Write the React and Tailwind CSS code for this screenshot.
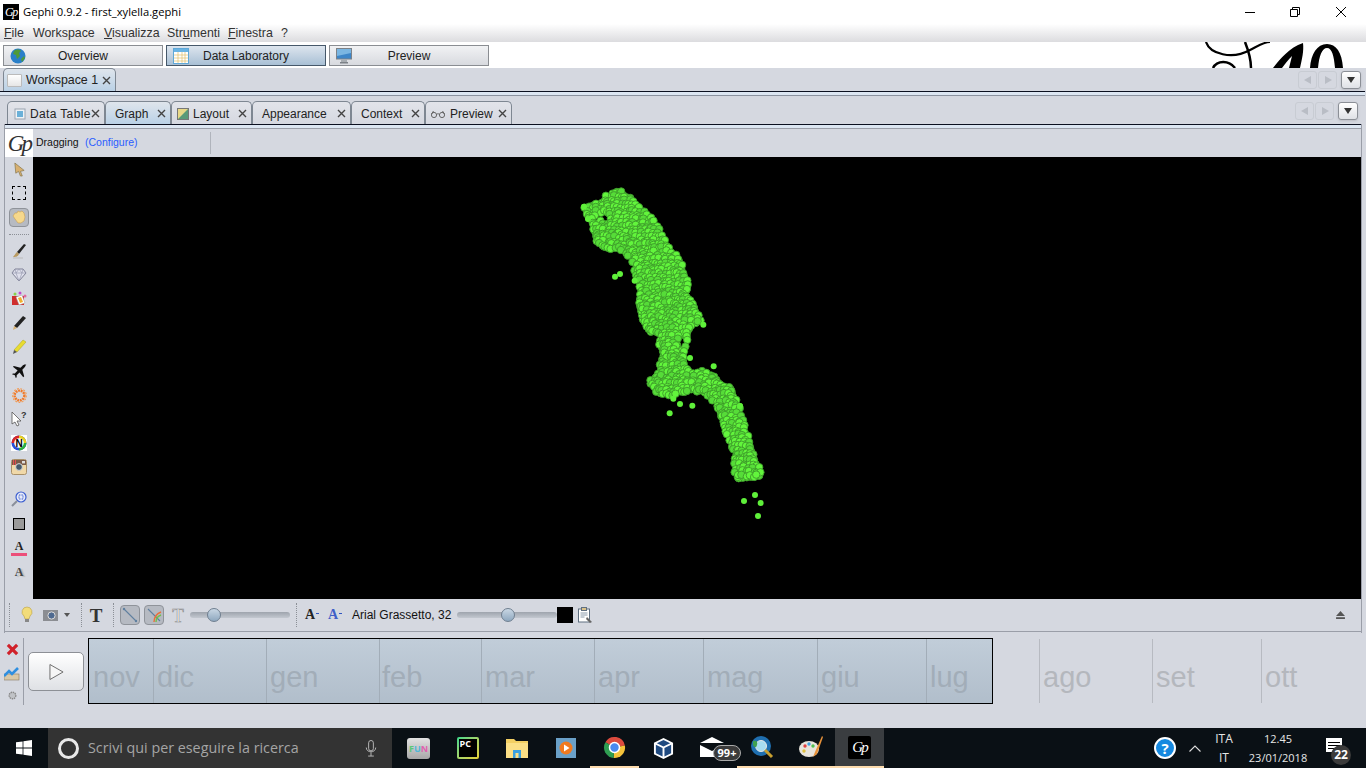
import React from 'react';

const OUTLINE = [
  [65, 80], [110, 70], [140, 45], [175, 28], [215, 50], [245, 80], [270, 105], [300, 150], [320, 190], [345, 220], [365, 240], [380, 290], [390, 320], [385, 345], [410, 380], [425, 430], [400, 440], [385, 470], [375, 510], [380, 560], [400, 580], [430, 565], [470, 585], [490, 615], [520, 625], [535, 670], [550, 720], [575, 790], [610, 895], [525, 905], [520, 810], [500, 770], [490, 730], [475, 710], [470, 675], [440, 650], [420, 640], [380, 635], [340, 650], [295, 645], [265, 605], [295, 570], [305, 530], [292, 490], [300, 460], [265, 460], [240, 420], [230, 370], [235, 330], [225, 280], [215, 240], [175, 210], [125, 205], [100, 170], [90, 130], [80, 100],
];
const STRAYS = [[180, 282], [165, 290], [224, 302], [390, 534], [461, 559], [340, 656], [360, 672], [397, 677], [329, 700], [585, 945], [552, 963], [602, 969], [594, 1008], [540, 678], [430, 434], [72, 80], [84, 117]];

function inside(x, y) {
  let hit = false;
  for (let i = 0, j = OUTLINE.length - 1; i < OUTLINE.length; j = i++) {
    const [xi, yi] = OUTLINE[i];
    const [xj, yj] = OUTLINE[j];
    if (yi > y !== yj > y && x < ((xj - xi) * (y - yi)) / (yj - yi) + xi) hit = !hit;
  }
  return hit;
}

function inHole(x, y) {
  return (x > 112 && x < 148 && y > 100 && y < 122) || (x > 356 && x < 374 && y > 470 && y < 510);
}

function buildNodes() {
  let seed = 12345;
  const rnd = () => {
    seed = (seed * 1103515245 + 12345) % 2147483648;
    return seed / 2147483648;
  };
  const nodes = [];
  // edge nodes keep the outline of the cluster crisp
  OUTLINE.forEach(([x1, y1], i) => {
    const [x2, y2] = OUTLINE[(i + 1) % OUTLINE.length];
    const len = Math.hypot(x2 - x1, y2 - y1);
    const steps = Math.max(1, Math.round(len / 13));
    for (let s = 0; s < steps; s++) {
      const t = s / steps;
      const px = x1 + (x2 - x1) * t - ((y2 - y1) / len) * 9;
      const py = y1 + (y2 - y1) * t + ((x2 - x1) / len) * 9;
      if (inside(px, py) && !inHole(px, py)) nodes.push([px, py, rnd() > 0.4]);
    }
  });
  for (let y = 28; y < 895; y += 11) {
    for (let x = 65; x < 612; x += 11) {
      const px = x + rnd() * 10 - 5;
      const py = y + rnd() * 10 - 5;
      if (!inside(px, py) || inHole(px, py) || py > 893) continue;
      if (px > 350 && px < 385 && py > 420 && py < 440 && rnd() > 0.5) continue;
      nodes.push([px, py, rnd() > 0.4]);
    }
  }
  return nodes;
}

const NODES = buildNodes();

function Graph() {
  return (
    <svg viewBox="33 157 1328 442" className="block h-full w-full">
      {NODES.map(([x, y, bright], i) => (
        <circle key={i} cx={560 + x / 3} cy={180 + y / 3} r="3.7" fill={bright ? '#62f53c' : '#56dc38'} stroke="#3d9a2a" strokeWidth="0.9" />
      ))}
      {STRAYS.map(([x, y], i) => (
        <circle key={i} cx={560 + x / 3} cy={180 + y / 3} r="3" fill="#5ff03a" />
      ))}
    </svg>
  );
}

function GephiMark({ className }) {
  return <span className={`font-['Liberation_Serif',serif] italic leading-none tracking-[-0.12em] ${className}`}>Gp</span>;
}

function Close() {
  return (
    <svg viewBox="0 0 9 9" className="size-[9px] shrink-0">
      <path d="M1 1l7 7M8 1l-7 7" stroke="#444" strokeWidth="1.4" />
    </svg>
  );
}

function Tab({ width, selected, icon, label, pad = 'pl-[6px]' }) {
  return (
    <div className={`flex h-full shrink-0 items-center justify-between rounded-t-[5px] border border-b-0 border-[#7e8792] pr-[4px] pt-px text-[12px] text-[#222] ${pad} ${width} ${selected ? 'bg-linear-to-b from-[#dfe5ec] to-[#bad1e6]' : 'bg-linear-to-b from-[#e2e4ea] to-[#d5d8e0]'}`}>
      <span className="flex items-center gap-[4px] whitespace-nowrap">
        {icon}
        {label}
      </span>
      <Close />
    </div>
  );
}

function NavButtons() {
  return (
    <div className="flex items-center">
      <div className="flex h-[18px] w-[19px] items-center justify-center rounded-[3px] border border-[#c8ccd3] text-[#b9bdc5]">
        <svg viewBox="0 0 8 8" className="size-[8px]"><path d="M7 0v8L0 4z" fill="currentColor" /></svg>
      </div>
      <div className="ml-px flex h-[18px] w-[19px] items-center justify-center rounded-[3px] border border-[#c8ccd3] text-[#b9bdc5]">
        <svg viewBox="0 0 8 8" className="size-[8px]"><path d="M1 0v8l7-4z" fill="currentColor" /></svg>
      </div>
      <div className="ml-[4px] flex h-[18px] w-[20px] items-center justify-center rounded-[3px] border border-[#8b8f96] bg-linear-to-b from-white to-[#dfe1e6] shadow-sm">
        <svg viewBox="0 0 8 6" className="h-[6px] w-[8px]"><path d="M0 0h8L4 6z" fill="#333" /></svg>
      </div>
    </div>
  );
}

function PerspectiveButton({ selected, icon, label }) {
  return (
    <div className={`flex h-[21px] w-40 items-center border pl-[6px] text-[12px] text-[#222] ${selected ? 'border-[#46586a] bg-linear-to-b from-[#dde5ee] to-[#a9c0d5]' : 'border-[#8a8d92] bg-linear-to-b from-[#f1f2f4] to-[#d8dadf]'}`}>
      <span className="flex w-[16px] justify-center">{icon}</span>
      <span className="flex-1 pr-[22px] text-center">{label}</span>
    </div>
  );
}

function Globe() {
  return (
    <svg viewBox="0 0 16 16" className="size-[16px]">
      <circle cx="8" cy="8" r="7.5" fill="#2a7fc8" />
      <path d="M4 3c2-2 6-2 7 0l-2 2 1 3-3 3-1-4-3-1zM11 11l3-3 1 2-3 4z" fill="#4f9a3a" />
    </svg>
  );
}

function SheetIcon() {
  return (
    <svg viewBox="0 0 16 16" className="size-[16px]">
      <rect x="0.5" y="0.5" width="15" height="15" fill="#fff" stroke="#5fa8d8" />
      <rect x="1" y="1" width="14" height="3" fill="#6ab4e4" />
      <path d="M1 7h14M1 10h14M1 13h14M5 4v11M9 4v11M12 4v11" stroke="#e0c06a" strokeWidth="0.7" />
    </svg>
  );
}

function Monitor() {
  return (
    <svg viewBox="0 0 16 16" className="size-[16px]">
      <rect x="0.5" y="0.5" width="15" height="10.5" fill="#3d86c8" stroke="#7d8288" />
      <path d="M1 1h14v4L1 8z" fill="#7ab6e2" />
      <rect x="5" y="11" width="6" height="3" fill="#a8adb2" />
      <rect x="4" y="14" width="8" height="1.5" fill="#7d8288" />
    </svg>
  );
}

function ToolSlot({ children, className = 'h-6' }) {
  return <div className={`flex items-center justify-center ${className}`}>{children}</div>;
}

function LeftTools() {
  return (
    <div className="flex w-[28px] shrink-0 flex-col">
      <ToolSlot>
        <svg viewBox="0 0 14 16" className="h-[15px] w-[13px]"><path d="M2 1l10 8-4 1 2 5-2 0-2-5-3 2z" fill="#d8b070" stroke="#8a7a50" strokeWidth="0.8" /></svg>
      </ToolSlot>
      <ToolSlot>
        <div className="size-[14px] border border-dashed border-black" />
      </ToolSlot>
      <ToolSlot>
        <div className="flex h-[19px] w-[20px] items-center justify-center rounded-[4px] border border-[#8f939a] bg-[#b6bac2]">
          <svg viewBox="0 0 14 14" className="size-[14px]"><path d="M1 6l2-3 2 0 1-2 2 1 2-1 2 2 1 4-1 4-3 2H6L3 9z" fill="#f6d88c" stroke="#c79f55" strokeWidth="0.6" /></svg>
        </div>
      </ToolSlot>
      <ToolSlot className="h-[10px]">
        <div className="w-[20px] border-t border-dotted border-[#8b8f96]" />
      </ToolSlot>
      <ToolSlot>
        <svg viewBox="0 0 16 16" className="size-[16px]"><path d="M13 1l2 1-7 9-2-2z" fill="#222" /><path d="M6 9l2 2c-1 3-4 3-6 3 1-1 2-3 4-5z" fill="#b99a60" /><path d="M2 15h10" stroke="#bbb" /></svg>
      </ToolSlot>
      <ToolSlot>
        <svg viewBox="0 0 16 14" className="h-[14px] w-[16px]"><path d="M4 1h8l3 4-7 8-7-8z" fill="#dfe0ec" stroke="#7f8196" /><path d="M1 5h14M5 5l3 8 3-8M4 1l1 4 3-4 3 4 1-4" stroke="#9a9cb2" strokeWidth="0.7" fill="none" /></svg>
      </ToolSlot>
      <ToolSlot>
        <svg viewBox="0 0 16 16" className="size-[16px]">
          <rect x="1" y="5" width="12" height="9" fill="#cf2e2e" />
          <circle cx="4" cy="3" r="1.5" fill="#8ad04a" /><circle cx="9" cy="2" r="1.5" fill="#c04ad0" /><circle cx="14" cy="5" r="1.5" fill="#e06aa0" />
          <path d="M5 6l6-2 3 8-6 2z" fill="#fff" stroke="#999" strokeWidth="0.5" /><path d="M7 7l3-1 2 5-3 1z" fill="#f0b030" />
        </svg>
      </ToolSlot>
      <ToolSlot>
        <svg viewBox="0 0 16 16" className="size-[16px]"><path d="M12 1l3 2-9 10-3-2z" fill="#222" /><path d="M3 11l3 2-4 2z" fill="#d8b070" /></svg>
      </ToolSlot>
      <ToolSlot>
        <svg viewBox="0 0 16 16" className="size-[16px]"><path d="M12 1l3 2-9 10-3-2z" fill="#e8dc30" stroke="#a8a020" strokeWidth="0.5" /><path d="M3 11l3 2-4 2z" fill="#555" /></svg>
      </ToolSlot>
      <ToolSlot>
        <svg viewBox="0 0 16 16" className="size-[15px]"><path d="M15 1c-1-1-3 0-4 1L9 4 2 2 1 3l5 4-3 3H1L0 11l3 1 1 3 1-1v-2l3-3 4 5 1-1-2-7 2-2c1-1 2-3 2-4z" fill="#111" /></svg>
      </ToolSlot>
      <ToolSlot>
        <svg viewBox="0 0 16 16" className="size-[15px]">
          <circle cx="8" cy="8" r="5.2" fill="none" stroke="#f07a2a" strokeWidth="2.6" strokeDasharray="2 0.8" />
          <circle cx="8" cy="8" r="7.3" fill="none" stroke="#f59a50" strokeWidth="1.2" strokeDasharray="2 1.5" />
        </svg>
      </ToolSlot>
      <ToolSlot>
        <svg viewBox="0 0 16 16" className="size-[16px]"><path d="M1 1v12l3-2 2 4 2-1-2-4h4z" fill="#fff" stroke="#555" strokeWidth="0.8" /><text x="10" y="7" fontSize="9" fontWeight="700" fill="#333" fontFamily="Liberation Sans">?</text></svg>
      </ToolSlot>
      <ToolSlot>
        <svg viewBox="0 0 16 16" className="size-[16px]">
          <rect width="16" height="16" fill="#fff" />
          <circle cx="8" cy="8" r="7.5" fill="#2a50d8" /><path d="M8 .5A7.5 7.5 0 0 1 15.5 8H8z" fill="#e8d020" /><path d="M15.5 8A7.5 7.5 0 0 1 8 15.5V8z" fill="#30b040" /><path d="M.5 8A7.5 7.5 0 0 1 8 .5V8z" fill="#d82828" />
          <circle cx="8" cy="8" r="4.8" fill="#fff" />
          <text x="8" y="11.5" textAnchor="middle" fontSize="10" fontWeight="700" fill="#000" fontFamily="Liberation Sans">N</text>
        </svg>
      </ToolSlot>
      <ToolSlot>
        <svg viewBox="0 0 16 16" className="size-[16px]">
          <rect x="0.5" y="0.5" width="15" height="15" rx="2" fill="#f0d8a8" stroke="#a8906a" />
          <path d="M1 1h14v5H1z" fill="#7a5a48" /><path d="M2 1h1v5H2zM4 1h1v5H4z" fill="#e05050" />
          <circle cx="8" cy="8" r="3.4" fill="#44596a" stroke="#d8d8d8" /><rect x="11" y="2" width="3" height="2.4" fill="#ddd" />
        </svg>
      </ToolSlot>
      <div className="h-[8px]" />
      <ToolSlot>
        <svg viewBox="0 0 16 16" className="size-[16px]"><circle cx="10" cy="6" r="5" fill="#e8ecf8" stroke="#3d5fd0" strokeWidth="1.2" /><rect x="8" y="4" width="4" height="4" fill="none" stroke="#3d5fd0" strokeDasharray="1 0.6" /><path d="M6 10l-5 5" stroke="#8a8f9a" strokeWidth="2" /></svg>
      </ToolSlot>
      <ToolSlot className="h-[25px]">
        <div className="size-[12px] border border-black bg-[#9a9a9a]" />
      </ToolSlot>
      <ToolSlot className="h-[24px]">
        <div className="flex w-[16px] flex-col items-center">
          <span className="font-['Liberation_Serif',serif] text-[12px] font-bold leading-[11px] text-[#222]">A</span>
          <span className="mt-[1px] h-[3px] w-[16px] bg-[#ec4f7a]" />
        </div>
      </ToolSlot>
      <ToolSlot className="h-[23px]">
        <span className="font-['Liberation_Serif',serif] text-[12px] font-bold text-[#444] [text-shadow:2px_1px_1px_#bbb]">A</span>
      </ToolSlot>
    </div>
  );
}

function Dotted({ className }) {
  return <div className={`h-[24px] w-px shrink-0 border-l border-dotted border-[#8b8f96] ${className}`} />;
}

function Slider({ knob }) {
  return (
    <div className="relative ml-[5px] h-[6px] w-[100px] shrink-0 rounded-full bg-linear-to-b from-[#9ea4ad] to-[#c3c8d0]">
      <div className={`absolute -top-[4px] size-[14px] rounded-full border border-[#6f7f90] bg-linear-to-b from-[#c9d7e4] to-[#8fa8bf] ${knob}`} />
    </div>
  );
}

function BottomBar() {
  return (
    <div className="flex h-[33px] items-center border-b border-[#9a9ea8]">
      <Dotted className="ml-[4px]" />
      <svg viewBox="0 0 12 18" className="ml-[9px] h-[18px] w-[16px] shrink-0">
        <path d="M6 1a5 5 0 0 1 3 9l-1 3H4l-1-3a5 5 0 0 1 3-9z" fill="#f2dc7a" stroke="#b89f48" strokeWidth="0.6" />
        <rect x="4" y="13" width="4" height="3" fill="#888" />
      </svg>
      <svg viewBox="0 0 15 12" className="ml-[8px] h-[12px] w-[15px] shrink-0">
        <rect x="0" y="1" width="15" height="11" fill="#8b8d92" />
        <circle cx="8.5" cy="6.5" r="3.6" fill="#4f6a90" stroke="#dcdcdc" />
      </svg>
      <svg viewBox="0 0 6 4" className="ml-[6px] h-[4px] w-[6px] shrink-0"><path d="M0 0h6L3 4z" fill="#555" /></svg>
      <Dotted className="ml-[11px]" />
      <span className="ml-[7px] w-[14px] shrink-0 text-center font-['Liberation_Serif',serif] text-[19px] font-bold leading-none text-[#333]">T</span>
      <Dotted className="ml-[10px]" />
      <div className="ml-[6px] flex size-[20px] shrink-0 items-center justify-center rounded-[4px] border border-[#8f939a] bg-[#b6bac2]">
        <svg viewBox="0 0 16 16" className="size-[16px]"><path d="M2 2l12 12" stroke="#5f7f9f" strokeWidth="1.1" /><circle cx="2" cy="2" r="1.2" fill="#5f7f9f" /><circle cx="14" cy="14" r="1.2" fill="#5f7f9f" /></svg>
      </div>
      <div className="ml-[4px] flex size-[20px] shrink-0 items-center justify-center rounded-[4px] border border-[#8f939a] bg-[#b6bac2]">
        <svg viewBox="0 0 16 16" className="size-[16px]"><path d="M2 2l12 12" stroke="#5f7f9f" strokeWidth="1.1" /><path d="M8 15c0-5 2-8 7-10" fill="none" stroke="#e8703a" strokeWidth="1.4" /><path d="M10 15c0-4 2-6 5-7" fill="none" stroke="#6fc04a" strokeWidth="1.4" /></svg>
      </div>
      <span className="ml-[7px] w-[14px] shrink-0 text-center font-['Liberation_Serif',serif] text-[19px] leading-none text-white [-webkit-text-stroke:0.6px_#888]">T</span>
      <Slider knob="left-[17px]" />
      <Dotted className="ml-[6px]" />
      <span className="ml-[8px] flex w-[14px] shrink-0 items-start font-['Liberation_Serif',serif] text-[14px] font-bold leading-none text-[#222]">A<i className="mt-[5px] ml-px block h-px w-[3px] bg-[#2f55c0]" /></span>
      <span className="ml-[9px] flex w-[14px] shrink-0 items-start font-['Liberation_Serif',serif] text-[14px] font-bold leading-none text-[#3f5fc8]">A<i className="mt-[5px] ml-px block h-px w-[3px] bg-[#2f55c0]" /></span>
      <span className="ml-[10px] w-[101px] shrink-0 whitespace-nowrap text-[12px] text-[#111]">Arial Grassetto, 32</span>
      <div className="-ml-px"><Slider knob="left-[44px]" /></div>
      <div className="size-[16px] shrink-0 bg-black" />
      <svg viewBox="0 0 16 16" className="ml-[4px] size-[16px] shrink-0">
        <rect x="1.5" y="2" width="11" height="13" fill="#fff" stroke="#5f6f80" />
        <rect x="4.5" y="0.5" width="5" height="3" fill="#d8c088" stroke="#5f6f80" />
        <path d="M3.5 6h7M3.5 8h7M3.5 10h4" stroke="#8a9aaa" />
        <path d="M10 10l5 5-2 1-4-4z" fill="#666" />
      </svg>
      <svg viewBox="0 0 10 9" className="ml-auto mr-[16px] h-[8px] w-[9px] shrink-0"><path d="M5 0l5 5.5H0z" fill="#555" /><rect y="7" width="10" height="2" fill="#555" /></svg>
    </div>
  );
}

const SELECTED_MONTHS = [
  ['nov', 'w-[64px] pl-[4px]'], ['dic', 'w-[113px] border-l pl-[3px]'], ['gen', 'w-[113px] border-l pl-[3px]'], ['feb', 'w-[102px] border-l pl-[2px]'], ['mar', 'w-[113px] border-l pl-[3px]'],
  ['apr', 'w-[109px] border-l pl-[3px]'], ['mag', 'w-[114px] border-l pl-[3px]'], ['giu', 'w-[109px] border-l pl-[3px]'], ['lug', 'w-[66px] border-l pl-[3px]'],
];
const REST_MONTHS = [['ago', 'w-[113px]'], ['set', 'w-[109px]'], ['ott', 'w-[80px]']];

function Timeline() {
  return (
    <div className="flex h-[95px] items-start pt-[5px]">
      <div className="ml-[4px] flex h-[67px] w-[20px] shrink-0 flex-col items-center justify-around border-r border-[#9a9ea8] pr-[3px]">
        <svg viewBox="0 0 14 14" className="size-[13px]"><path d="M2 2l10 10M12 2L2 12" stroke="#d0212a" strokeWidth="3.4" /></svg>
        <svg viewBox="0 0 16 16" className="size-[16px]"><rect x="0" y="9" width="15" height="6" fill="#d8c8a8" stroke="#8a7a60" strokeWidth="0.6" /><path d="M0 11l5-5 3 3 6-6" fill="none" stroke="#2f8fe0" strokeWidth="2.6" /></svg>
        <svg viewBox="0 0 12 12" className="size-[11px]"><circle cx="6" cy="6" r="3.6" fill="#c0c2c6" stroke="#888" strokeWidth="1.5" strokeDasharray="1.6 0.8" /></svg>
      </div>
      <div className="ml-[4px] mt-[14px] flex h-[39px] w-[56px] shrink-0 items-center justify-center rounded-[5px] border border-[#8d9096] bg-linear-to-b from-white to-[#dfe1e5]">
        <svg viewBox="0 0 16 18" className="h-[18px] w-[15px]"><path d="M1 1v16l14-8z" fill="#f6f6f6" stroke="#666" /></svg>
      </div>
      <div className="ml-[4px] flex h-[66px] shrink-0 border border-black bg-linear-to-b from-[#c1cdd9] to-[#b1becb]">
        {SELECTED_MONTHS.map(([name, cls]) => (
          <div key={name} className={`h-full shrink-0 border-[#a2adb8] pt-[22px] text-[29px] leading-[32px] text-[#a2adb8] ${cls}`}>{name}</div>
        ))}
      </div>
      <div className="ml-[46px] mt-px flex h-[64px]">
        {REST_MONTHS.map(([name, cls]) => (
          <div key={name} className={`h-full shrink-0 border-l border-[#b7bac1] pl-[3px] pt-[22px] text-[29px] leading-[32px] text-[#b4b7bd] ${cls}`}>{name}</div>
        ))}
      </div>
    </div>
  );
}

function Chrome() {
  return (
    <svg viewBox="0 0 24 24" className="size-[23px]">
      <path d="M12 12L2.5 6.5A11 11 0 0 1 22.8 9.8z" fill="#dd4b3e" />
      <path d="M12 12l10.8-2.2A11 11 0 0 1 11 23z" fill="#f5c33b" />
      <path d="M12 12l-1 11A11 11 0 0 1 2.5 6.5z" fill="#2f9e52" />
      <circle cx="12" cy="12" r="5.2" fill="#4a8af0" stroke="#fff" strokeWidth="1.6" />
    </svg>
  );
}

function TaskIcons() {
  const slot = 'flex h-full w-[49px] shrink-0 items-center justify-center';
  const active = 'border-b-2 border-[#fddcae]';
  return (
    <div className="ml-[2px] flex h-full">
      <div className={slot}>
        <div className="flex h-[21px] w-[23px] items-center justify-center rounded-[3px] bg-linear-to-b from-[#e2e2e2] to-[#a8a8a8] text-[9px] font-bold leading-none">
          <span className="text-[#58c878]">F</span><span className="text-[#50b8d8]">U</span><span className="text-[#e060b0]">N</span>
        </div>
      </div>
      <div className={slot}>
        <div className="flex size-[22px] flex-col rounded-[2px] bg-linear-to-br from-[#2fd68a] to-[#e8d030] p-[2px]">
          <div className="flex-1 bg-black pl-px text-[9px] font-bold leading-[10px] text-white">PC</div>
        </div>
      </div>
      <div className={slot}>
        <svg viewBox="0 0 22 20" className="h-[20px] w-[22px]"><path d="M0 1h8l2 2h12v17H0z" fill="#f3cf63" /><path d="M0 5h22v15H0z" fill="#fbdf86" /><rect x="7" y="12" width="8" height="8" fill="#3aa0e0" /><rect x="9.5" y="15" width="3" height="5" fill="#fbdf86" /></svg>
      </div>
      <div className={slot}>
        <svg viewBox="0 0 20 20" className="size-[20px]"><rect width="20" height="20" fill="#6aa0c8" /><circle cx="10" cy="10" r="6.5" fill="#f07a20" /><path d="M8 6.5v7l5.5-3.5z" fill="#fff" /></svg>
      </div>
      <div className={`${slot} ${active}`}><Chrome /></div>
      <div className={slot}>
        <svg viewBox="0 0 22 24" className="h-[23px] w-[21px]"><path d="M11 1l10 5v12l-10 5-10-5V6z" fill="#fff" /><path d="M11 3l7 3.5-7 3.5-7-3.5z" fill="#1f4a80" /><path d="M3 8l7 3.5v9L3 17zM19 8l-7 3.5v9l7-3.5z" fill="#1f4a80" /></svg>
      </div>
      <div className={`${slot} relative`}>
        <svg viewBox="0 0 24 20" className="-ml-[2px] -mt-[3px] h-[20px] w-[24px]"><path d="M12 0l12 6H0z" fill="#fff" /><path d="M0 8l12 6 12-6v12H0z" fill="#fff" /></svg>
        <span className="absolute left-[25px] top-[17px] flex h-[16px] w-[28px] items-center justify-center rounded-full border border-[#aaa] bg-[#3b3b3b] text-[11px] font-bold text-white">99+</span>
      </div>
      <div className={`${slot} ${active}`}>
        <svg viewBox="0 0 24 24" className="size-[24px]"><circle cx="11" cy="11" r="10" fill="#1f6fb0" /><circle cx="11" cy="11" r="5.5" fill="#a8dcf0" stroke="#e8e8e8" /><path d="M15 15l7 7" stroke="#c8a030" strokeWidth="3" /><path d="M3 6c3-1 5 0 4 4s-3 2-4 0z" fill="#40a050" /></svg>
      </div>
      <div className={`${slot} ${active}`}>
        <svg viewBox="0 0 24 24" className="size-[24px]"><ellipse cx="10" cy="14" rx="10" ry="8" fill="#e8e4dc" /><circle cx="6" cy="11" r="1.7" fill="#e04040" /><circle cx="10" cy="9" r="1.7" fill="#40a0e0" /><circle cx="14" cy="11" r="1.7" fill="#50c050" /><circle cx="5" cy="16" r="1.7" fill="#e0c040" /><path d="M23 1l-7 16-2 5 4-3 6-17z" fill="#e8923a" /></svg>
      </div>
      <div className={`${slot} border-b-2 border-[#fddcae] bg-[#3a3d40]`}>
        <div className="flex size-[23px] items-center justify-center rounded-[2px] bg-black text-white"><GephiMark className="text-[15px]" /></div>
      </div>
    </div>
  );
}

function Taskbar() {
  return (
    <div className="flex h-10 shrink-0 items-center bg-[#0a1015] font-['Open_Sans',sans-serif] text-white">
      <div className="flex h-full w-12 shrink-0 items-center justify-center">
        <svg viewBox="0 0 16 16" className="size-[16px]"><path d="M0 2.3l6.6-.9v6.2H0zM7.4 1.3L16 0v7.6H7.4zM0 8.4h6.6v6.2L0 13.7zM7.4 8.4H16V16l-8.6-1.2z" fill="#fff" /></svg>
      </div>
      <div className="flex h-full w-[344px] shrink-0 items-center bg-[#333] pl-[10px]">
        <div className="size-[21px] shrink-0 rounded-full border-[3px] border-[#e8e8e8]" />
        <span className="ml-[9px] flex-1 whitespace-nowrap text-[14.3px] text-[#a5a5a5]">Scrivi qui per eseguire la ricerca</span>
        <svg viewBox="0 0 12 18" className="mr-[15px] h-[17px] w-[12px]"><rect x="3.5" y="0.5" width="5" height="11" rx="2.5" fill="none" stroke="#bbb" /><path d="M1 8c0 6 10 6 10 0M6 13v4M3 17h6" fill="none" stroke="#bbb" /></svg>
      </div>
      <TaskIcons />
      <div className="ml-auto flex h-full items-center">
        <div className="flex size-[22px] items-center justify-center rounded-full border-2 border-white bg-[#1689e0] text-[15px] font-bold leading-none text-white">?</div>
        <svg viewBox="0 0 12 7" className="ml-[13px] h-[7px] w-[12px]"><path d="M0.5 6.5L6 1l5.5 5.5" fill="none" stroke="#ddd" strokeWidth="1.1" /></svg>
        <div className="ml-[13px] flex w-[20px] flex-col items-center text-[12px] leading-[19px] text-[#e6e6e6]">
          <span>ITA</span>
          <span>IT</span>
        </div>
        <div className="ml-[9px] flex w-[70px] flex-col items-center text-[11px] leading-[19px] text-[#e6e6e6]">
          <span>12.45</span>
          <span className="whitespace-nowrap">23/01/2018</span>
        </div>
        <div className="relative ml-[13px] mr-[20px] h-[24px] w-[20px]">
          <div className="absolute left-0 top-[2px] flex h-[14px] w-[16px] flex-col justify-center gap-[2px] bg-white px-[2px]">
            <i className="block h-px bg-black" /><i className="block h-px bg-black" /><i className="block h-px bg-black" />
          </div>
          <span className="absolute left-[5px] top-[9px] flex size-[20px] items-center justify-center rounded-full bg-[#3b3b3b] text-[12px] font-bold text-white">22</span>
        </div>
      </div>
    </div>
  );
}

export default function App() {
  return (
    <div className="flex h-[768px] w-[1366px] flex-col overflow-hidden bg-[#d5d8e0] font-['Liberation_Sans',sans-serif]">
      {/* window title */}
      <div className="flex h-6 shrink-0 items-center bg-white pl-[3px]">
        <div className="flex size-[16px] items-center justify-center bg-black text-white"><GephiMark className="text-[12px]" /></div>
        <span className="ml-[4px] font-['Open_Sans',sans-serif] text-[11.2px] text-black">Gephi 0.9.2 - first_xylella.gephi</span>
        <div className="ml-auto flex items-center pr-[20px]">
          <span className="block h-px w-[10px] bg-black" />
          <svg viewBox="0 0 10 10" className="ml-[35px] size-[10px]"><path d="M2.5 2.5V.5h7v7h-2M.5 2.5h7v7h-7z" fill="none" stroke="#000" /></svg>
          <svg viewBox="0 0 10 10" className="ml-[36px] size-[10px]"><path d="M0 0l10 10M10 0L0 10" stroke="#000" strokeWidth="1" /></svg>
        </div>
      </div>
      {/* menu */}
      <div className="flex h-[18px] shrink-0 items-center bg-linear-to-b from-white to-[#dcdcdf] pl-[4px] text-[12.4px] text-[#333]">
        <span className="w-[29px]"><u>F</u>ile</span>
        <span className="w-[71px]">Workspace</span>
        <span className="w-[63px]"><u>V</u>isualizza</span>
        <span className="w-[61px]">Str<u>u</u>menti</span>
        <span className="w-[53px]"><u>F</u>inestra</span>
        <span>?</span>
      </div>
      {/* perspectives */}
      <div className="flex h-[26px] shrink-0 items-start bg-white">
        <div className="flex gap-[3px] pl-[3px] pt-[3px]">
          <PerspectiveButton icon={<Globe />} label="Overview" />
          <PerspectiveButton selected icon={<SheetIcon />} label="Data Laboratory" />
          <PerspectiveButton icon={<Monitor />} label="Preview" />
        </div>
        <svg viewBox="0 0 140 26" className="ml-auto mr-[21px] h-[26px] w-[140px]">
          <path d="M1 0c4 12 26 18 44 8 8-4 14-8 20-8" fill="none" stroke="#000" strokeWidth="2.2" />
          <path d="M40 0c4 10 6 18 6 26M8 26c4-8 16-8 22 0" fill="none" stroke="#000" strokeWidth="2.5" />
          <path d="M68 26c8-10 16-20 30-25 1 8-1 16-3 25H84c1-4 2-8 3-12-4 4-7 8-10 12z" fill="#000" />
          <path d="M122 2c9 0 15 8 16 24h-8c-1-12-3-20-8-20s-8 8-9 20h-8c1-14 7-24 17-24z" fill="#000" />
        </svg>
      </div>
      {/* workspace tabs */}
      <div className="h-[29px] shrink-0">
        <div className="flex h-[23px] items-stretch justify-between pl-[3px] pr-[5px]">
          <Tab width="w-[113px]" pad="pl-[3px]" selected icon={<span className="block h-[13px] w-[15px] rounded-[1px] border border-[#bbb] bg-linear-to-b from-white to-[#e6e6e6]" />} label={<span className="text-[12.4px]">Workspace 1</span>} />
          <NavButtons />
        </div>
        <div className="mr-px h-[5px] border-y border-y-[#0b1020] border-b-[#8c93a0] bg-[#dce6f2]" />
      </div>
      {/* main panel */}
      <div className="flex h-[536px] shrink-0 flex-col">
        <div className="flex h-[27px] shrink-0 items-stretch justify-between pl-[7px] pr-[8px] pt-[4px]">
          <div className="flex">
            <Tab width="w-[98px]" icon={<svg viewBox="0 0 12 12" className="size-[12px]"><rect x="1" y="1" width="10" height="10" fill="#eef2f6" stroke="#9aa4b0" /><rect x="3" y="3" width="6" height="6" fill="#6ab0d8" /></svg>} label={<span className="tracking-[0.03em]">Data Table</span>} />
            <Tab width="w-[66px]" selected pad="pl-[9px]" label="Graph" />
            <Tab width="w-[81px]" pad="pl-[5px]" icon={<svg viewBox="0 0 12 12" className="size-[12px]"><rect x="0.5" y="0.5" width="11" height="11" fill="#e8d888" stroke="#777" /><path d="M1 11L11 1v10z" fill="#5a9a78" /></svg>} label="Layout" />
            <Tab width="w-[99px]" pad="pl-[9px]" label="Appearance" />
            <Tab width="w-[74px]" pad="pl-[9px]" label="Context" />
            <Tab width="w-[87px]" pad="pl-[4px]" icon={<svg viewBox="0 0 16 8" className="h-[8px] w-[16px]"><circle cx="4" cy="5" r="2.6" fill="none" stroke="#666" /><circle cx="12" cy="5" r="2.6" fill="none" stroke="#666" /><path d="M6.5 4.5c1-1 2-1 3 0M1.5 4l2-3M14.5 4l-2-3" fill="none" stroke="#666" /></svg>} label="Preview" />
          </div>
          <div className="-mt-px mb-[3px] flex"><NavButtons /></div>
        </div>
        <div className="ml-[4px] mr-[4px] flex min-h-0 flex-1 flex-col border-x border-x-[#9a9ea8]">
          <div className="h-[5px] shrink-0 border-y border-t-[#0b1020] border-b-[#9a9ea8] bg-[#dce6f2]" />
          <div className="flex h-[28px] shrink-0 items-center">
            <div className="flex h-full w-[28px] items-center justify-center bg-white text-[#333]"><GephiMark className="text-[23px]" /></div>
            <span className="ml-[3px] w-[49px] text-[10.5px] text-[#111]">Dragging</span>
            <span className="w-[125px] text-[10.5px] text-[#2a5cff]">(Configure)</span>
            <span className="h-[22px] w-px bg-[#b0b4bc]" />
          </div>
          <div className="flex h-[442px] shrink-0">
            <LeftTools />
            <div className="min-w-0 flex-1 bg-black"><Graph /></div>
          </div>
          <BottomBar />
        </div>
      </div>
      <Timeline />
      <Taskbar />
    </div>
  );
}
